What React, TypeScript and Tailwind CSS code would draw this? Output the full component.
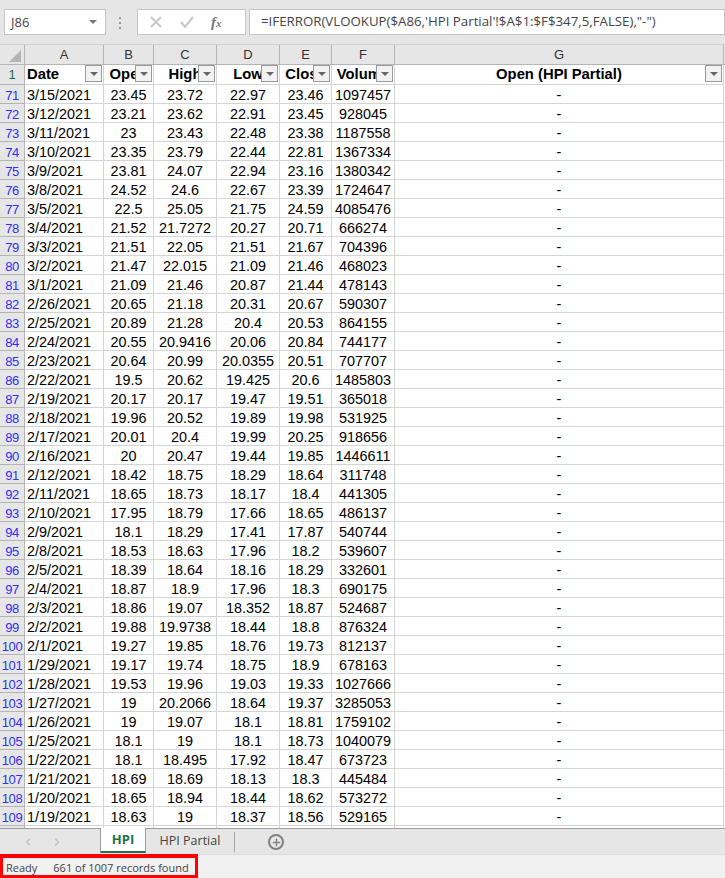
import { ChevronLeft, ChevronRight, Plus } from 'lucide-react'

const rows: [number, string, string, string, string, string, string][] = [
  [71, '3/15/2021', '23.45', '23.72', '22.97', '23.46', '1097457'],
  [72, '3/12/2021', '23.21', '23.62', '22.91', '23.45', '928045'],
  [73, '3/11/2021', '23', '23.43', '22.48', '23.38', '1187558'],
  [74, '3/10/2021', '23.35', '23.79', '22.44', '22.81', '1367334'],
  [75, '3/9/2021', '23.81', '24.07', '22.94', '23.16', '1380342'],
  [76, '3/8/2021', '24.52', '24.6', '22.67', '23.39', '1724647'],
  [77, '3/5/2021', '22.5', '25.05', '21.75', '24.59', '4085476'],
  [78, '3/4/2021', '21.52', '21.7272', '20.27', '20.71', '666274'],
  [79, '3/3/2021', '21.51', '22.05', '21.51', '21.67', '704396'],
  [80, '3/2/2021', '21.47', '22.015', '21.09', '21.46', '468023'],
  [81, '3/1/2021', '21.09', '21.46', '20.87', '21.44', '478143'],
  [82, '2/26/2021', '20.65', '21.18', '20.31', '20.67', '590307'],
  [83, '2/25/2021', '20.89', '21.28', '20.4', '20.53', '864155'],
  [84, '2/24/2021', '20.55', '20.9416', '20.06', '20.84', '744177'],
  [85, '2/23/2021', '20.64', '20.99', '20.0355', '20.51', '707707'],
  [86, '2/22/2021', '19.5', '20.62', '19.425', '20.6', '1485803'],
  [87, '2/19/2021', '20.17', '20.17', '19.47', '19.51', '365018'],
  [88, '2/18/2021', '19.96', '20.52', '19.89', '19.98', '531925'],
  [89, '2/17/2021', '20.01', '20.4', '19.99', '20.25', '918656'],
  [90, '2/16/2021', '20', '20.47', '19.44', '19.85', '1446611'],
  [91, '2/12/2021', '18.42', '18.75', '18.29', '18.64', '311748'],
  [92, '2/11/2021', '18.65', '18.73', '18.17', '18.4', '441305'],
  [93, '2/10/2021', '17.95', '18.79', '17.66', '18.65', '486137'],
  [94, '2/9/2021', '18.1', '18.29', '17.41', '17.87', '540744'],
  [95, '2/8/2021', '18.53', '18.63', '17.96', '18.2', '539607'],
  [96, '2/5/2021', '18.39', '18.64', '18.16', '18.29', '332601'],
  [97, '2/4/2021', '18.87', '18.9', '17.96', '18.3', '690175'],
  [98, '2/3/2021', '18.86', '19.07', '18.352', '18.87', '524687'],
  [99, '2/2/2021', '19.88', '19.9738', '18.44', '18.8', '876324'],
  [100, '2/1/2021', '19.27', '19.85', '18.76', '19.73', '812137'],
  [101, '1/29/2021', '19.17', '19.74', '18.75', '18.9', '678163'],
  [102, '1/28/2021', '19.53', '19.96', '19.03', '19.33', '1027666'],
  [103, '1/27/2021', '19', '20.2066', '18.64', '19.37', '3285053'],
  [104, '1/26/2021', '19', '19.07', '18.1', '18.81', '1759102'],
  [105, '1/25/2021', '18.1', '19', '18.1', '18.73', '1040079'],
  [106, '1/22/2021', '18.1', '18.495', '17.92', '18.47', '673723'],
  [107, '1/21/2021', '18.69', '18.69', '18.13', '18.3', '445484'],
  [108, '1/20/2021', '18.65', '18.94', '18.44', '18.62', '573272'],
  [109, '1/19/2021', '18.63', '19', '18.37', '18.56', '529165'],
]

const gridCols = 'grid grid-cols-[25px_79px_50px_63px_63px_52px_63px_329px_2px]'

function FilterButton() {
  return (
    <div className="absolute right-[1px] top-0 flex h-[17px] w-[17px] items-center justify-center border border-[#9a9a9a] bg-[#f2f2f2]">
      <div className="h-0 w-0 border-x-[4px] border-t-[4px] border-x-transparent border-t-[#666666]" />
    </div>
  )
}

// headers stay centred in the whole cell, the filter button sits over the text
function HeaderCell({ label, left }: { label: string; left?: boolean }) {
  return (
    <div className={`relative flex h-[20px] items-center overflow-hidden border-r border-b border-[#d4d4d4] text-[14.8px] font-bold ${left ? 'pl-[2px]' : 'justify-center'}`}>
      <span className="whitespace-nowrap">{label}</span>
      <FilterButton />
    </div>
  )
}

function ColumnLetter({ label }: { label: string }) {
  return (
    <div className="flex h-[19px] items-center justify-center border-r border-[#b5b5b5] text-[13px] text-[#333333]">
      {label}
    </div>
  )
}

function Cell({ value, left }: { value?: string; left?: boolean }) {
  return (
    <div className={`flex h-[19px] items-center overflow-hidden whitespace-nowrap border-r border-b border-[#d4d4d4] pt-[2px] ${left ? 'pl-[2px]' : 'justify-center'}`}>
      {value}
    </div>
  )
}

function RowNumber({ n }: { n?: number }) {
  return (
    <div className="flex h-[19px] items-center justify-center border-r border-b border-[#b5b5b5] bg-[#e6e6e6] pt-[2px] text-[13px] tracking-[-0.4px] text-[#3030f0]">
      {n}
    </div>
  )
}

export default function App() {
  return (
    <div className="flex h-[878px] w-[725px] flex-col overflow-hidden bg-white font-['Liberation_Sans',Arial,sans-serif] text-[14.4px] leading-none text-black">
      {/* formula bar */}
      <div className="flex h-[45px] shrink-0 items-start border-b border-[#d0d0d0] bg-[#e6e6e6] pl-[4px] pt-[9px] font-['Open_Sans',sans-serif]">
        <div className="flex h-[26px] w-[102px] items-center justify-between border border-[#c6c6c6] bg-white pl-[6px] pr-[8px] text-[13px] text-[#444444]">
          <span>J86</span>
          <div className="h-0 w-0 border-x-[4px] border-t-[4px] border-x-transparent border-t-[#777777]" />
        </div>
        <div className="ml-[13px] mt-[8px] flex w-[4px] flex-col gap-[3px]">
          <div className="h-[2px] w-[2px] bg-[#999999]" />
          <div className="h-[2px] w-[2px] bg-[#999999]" />
          <div className="h-[2px] w-[2px] bg-[#999999]" />
        </div>
        <div className="ml-[14px] flex h-[26px] w-[109px] items-center border border-[#c6c6c6] bg-white">
          <svg width="14" height="14" viewBox="0 0 14 14" className="ml-[11px]">
            <path d="M2 2l10 10M12 2L2 12" stroke="#c8c8c8" strokeWidth="2" />
          </svg>
          <svg width="16" height="14" viewBox="0 0 16 14" className="ml-[16px]">
            <path d="M2 7l4 5 8-10" stroke="#c8c8c8" strokeWidth="2.2" fill="none" />
          </svg>
          <span className="ml-[16px] font-['Liberation_Serif',serif] text-[15px] font-bold italic text-[#777777]">
            f<span className="text-[11px]">x</span>
          </span>
        </div>
        <div className="ml-[3px] flex h-[26px] flex-1 items-center border border-[#c6c6c6] bg-white pl-[11px] text-[13.27px] text-[#444444]">
          <span className="whitespace-nowrap">=IFERROR(VLOOKUP($A86,'HPI Partial'!$A$1:$F$347,5,FALSE),"-")</span>
        </div>
      </div>

      {/* sheet */}
      <div className="h-[783px] shrink-0 overflow-hidden">
        <div className={gridCols + ' bg-[#e6e6e6]'}>
          <div className="relative h-[19px] border-r border-[#b5b5b5]">
            <div className="absolute bottom-[2px] right-[3px] h-0 w-0 border-b-[12px] border-l-[12px] border-b-[#b5b5b5] border-l-transparent" />
          </div>
          {['A', 'B', 'C', 'D', 'E', 'F', 'G'].map((l) => (
            <ColumnLetter key={l} label={l} />
          ))}
          <div />
        </div>
        <div className="h-[1px] bg-[#b5b5b5]" />

        <div className={gridCols}>
          <div className="flex h-[20px] items-center justify-center border-r border-b border-[#b5b5b5] bg-[#e6e6e6] text-[13px] text-[#1f6e43]">
            1
          </div>
          <HeaderCell label="Date" left />
          <HeaderCell label="Open" />
          <HeaderCell label="High" />
          <HeaderCell label="Low" />
          <HeaderCell label="Close" />
          <HeaderCell label="Volume" />
          <HeaderCell label="Open (HPI Partial)" />
          <div />
        </div>

        {rows.map(([n, date, open, high, low, close, volume]) => (
          <div key={n} className={gridCols}>
            <RowNumber n={n} />
            <Cell value={date} left />
            <Cell value={open} />
            <Cell value={high} />
            <Cell value={low} />
            <Cell value={close} />
            <Cell value={volume} />
            <Cell value="-" />
            <div />
          </div>
        ))}

        <div className={gridCols}>
          <RowNumber />
          <Cell />
          <Cell />
          <Cell />
          <Cell />
          <Cell />
          <Cell />
          <Cell />
          <div />
        </div>
      </div>

      {/* sheet tabs */}
      <div className="flex h-[26px] shrink-0 items-start border-t border-[#9c9c9c] bg-[#e6e6e6] font-['Open_Sans',sans-serif] text-[12.5px] text-[#444444]">
        <div className="flex h-[25px] w-[100px] items-center pl-[22px] text-[#c4c4c4]">
          <ChevronLeft size={12} strokeWidth={3} />
          <ChevronRight size={12} strokeWidth={3} className="ml-[17px]" />
        </div>
        <div className="-mt-[1px] flex h-[25px] w-[46px] items-center justify-center border-x border-b-2 border-x-[#9c9c9c] border-b-[#217346] bg-white text-[13px] font-bold text-[#217346]">
          HPI
        </div>
        <div className="flex h-[20px] w-[89px] items-center justify-center self-center border-r border-[#a8a8a8]">
          HPI Partial
        </div>
        <div className="ml-[33px] mt-[5px] flex h-[16px] w-[16px] items-center justify-center rounded-full border-2 border-[#808080] text-[#808080]">
          <Plus size={11} strokeWidth={3} />
        </div>
      </div>

      {/* status bar */}
      <div className="flex h-[24px] shrink-0 border-t border-[#dcdcdc] bg-[#f1f1f1] font-['Open_Sans',sans-serif] text-[11px] text-[#444444]">
        <div className="-mt-[1px] flex h-[24px] w-[198px] items-center whitespace-nowrap border-[3px] border-t-[4px] border-[#ff0000] pl-[3px] pt-[1px]">
          <span>Ready</span>
          <span className="ml-[16px]">661 of 1007 records found</span>
        </div>
      </div>
    </div>
  )
}
